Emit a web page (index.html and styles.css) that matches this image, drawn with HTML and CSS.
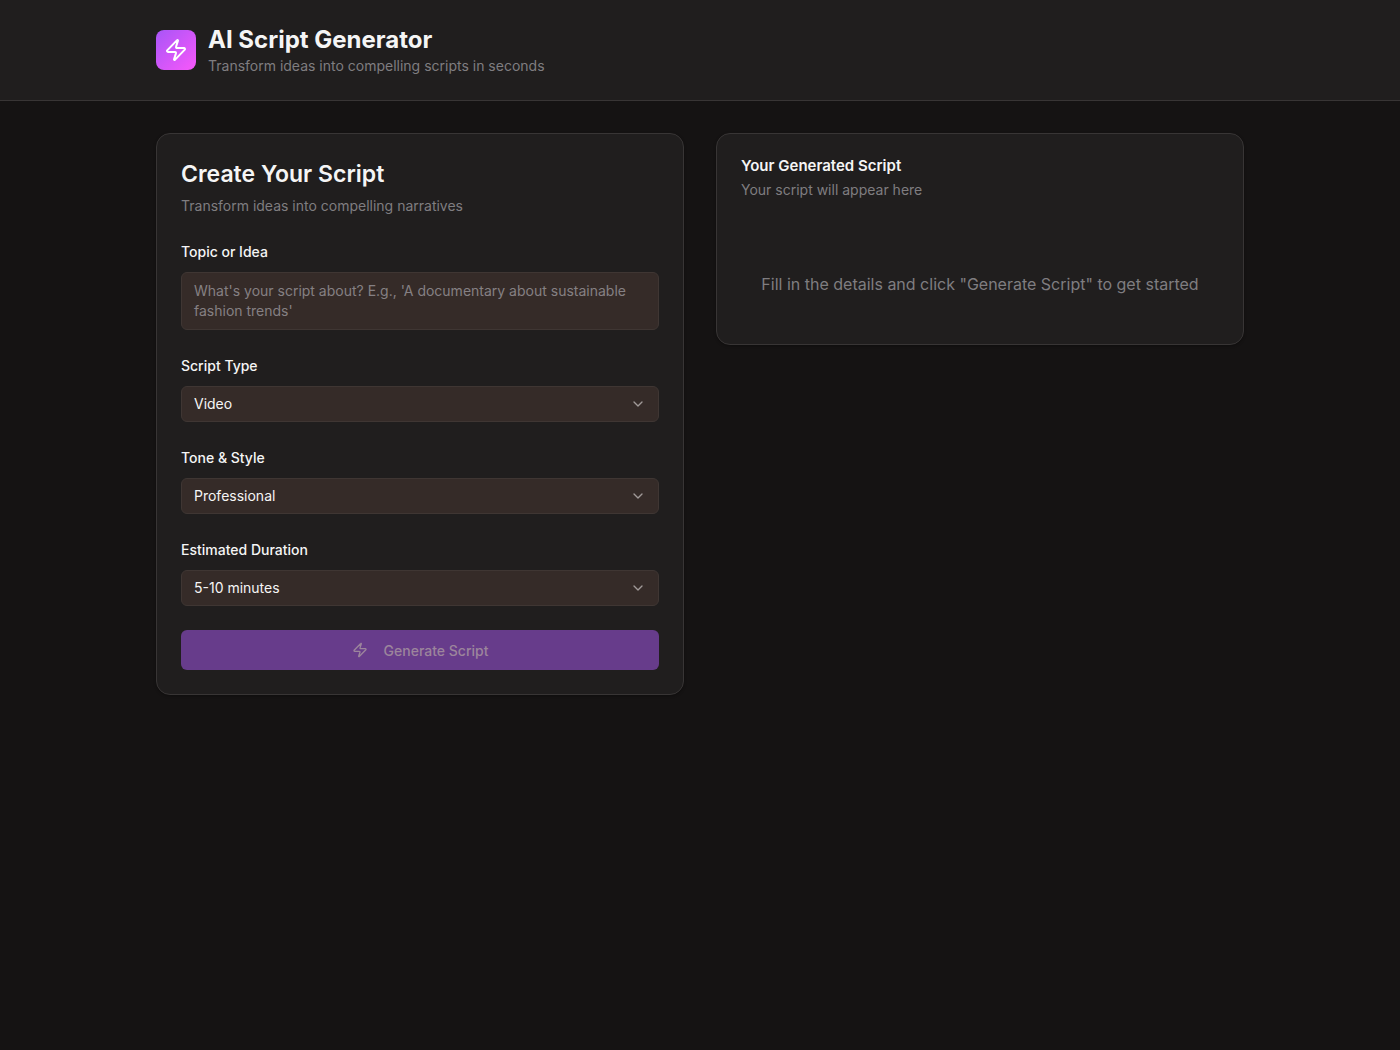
FILE: index.html
```
<!DOCTYPE html>
<html lang="en">
<head>
    <meta charset="UTF-8">
    <meta name="viewport" content="width=device-width, initial-scale=1.0">
    <title>AI Script Generator</title>
    <link rel="stylesheet" href="styles.css">
</head>
<body>

<header class="site-header">
    <div class="container brand">
        <div class="logo">
            <svg class="icon icon-logo" viewBox="0 0 24 24" aria-hidden="true">
                <path d="M4 14a1 1 0 0 1-.78-1.63l9.9-10.2a.5.5 0 0 1 .86.46l-1.92 6.02A1 1 0 0 0 13 10h7a1 1 0 0 1 .78 1.63l-9.9 10.2a.5.5 0 0 1-.86-.46l1.92-6.02A1 1 0 0 0 11 14z"/>
            </svg>
        </div>
        <div>
            <h1>AI Script Generator</h1>
            <p class="muted">Transform ideas into compelling scripts in seconds</p>
        </div>
    </div>
</header>

<main class="container columns">
    <section class="card">
        <h2>Create Your Script</h2>
        <p class="muted">Transform ideas into compelling narratives</p>

        <form class="script-form">
            <div class="field">
                <label for="topic">Topic or Idea</label>
                <textarea id="topic" class="control" rows="2" placeholder="What's your script about? E.g., 'A documentary about sustainable fashion trends'"></textarea>
            </div>

            <div class="field">
                <label for="scriptType">Script Type</label>
                <div class="select-wrap">
                    <select id="scriptType" class="control">
                        <option>Video</option>
                    </select>
                    <svg class="icon chevron" viewBox="0 0 24 24" aria-hidden="true"><path d="m6 9 6 6 6-6"/></svg>
                </div>
            </div>

            <div class="field">
                <label for="tone">Tone &amp; Style</label>
                <div class="select-wrap">
                    <select id="tone" class="control">
                        <option>Professional</option>
                    </select>
                    <svg class="icon chevron" viewBox="0 0 24 24" aria-hidden="true"><path d="m6 9 6 6 6-6"/></svg>
                </div>
            </div>

            <div class="field">
                <label for="duration">Estimated Duration</label>
                <div class="select-wrap">
                    <select id="duration" class="control">
                        <option>5-10 minutes</option>
                    </select>
                    <svg class="icon chevron" viewBox="0 0 24 24" aria-hidden="true"><path d="m6 9 6 6 6-6"/></svg>
                </div>
            </div>

            <button type="submit" class="generate" disabled>
                <svg class="icon icon-small" viewBox="0 0 24 24" aria-hidden="true">
                    <path d="M4 14a1 1 0 0 1-.78-1.63l9.9-10.2a.5.5 0 0 1 .86.46l-1.92 6.02A1 1 0 0 0 13 10h7a1 1 0 0 1 .78 1.63l-9.9 10.2a.5.5 0 0 1-.86-.46l1.92-6.02A1 1 0 0 0 11 14z"/>
                </svg>
                Generate Script
            </button>
        </form>
    </section>

    <section class="card result">
        <h3>Your Generated Script</h3>
        <p class="muted">Your script will appear here</p>
        <p class="empty">Fill in the details and click "Generate Script" to get started</p>
    </section>
</main>

</body>
</html>
```

FILE: styles.css
```
* {
    box-sizing: border-box;
}
body {
    margin: 0;
    font-family: Inter, "Liberation Sans", sans-serif;
    font-size: 16px;
    line-height: 24px;
    background-color: #151313;
    color: #f5f5f5;
}
h1, h2, h3, p {
    margin: 0;
}
.container {
    max-width: 1152px;
    margin: 0 auto;
    padding: 0 32px;
}

/* Header */
.site-header {
    padding: 24px 0;
    background-color: #201e1e;
    border-bottom: 1px solid #383535;
}
.brand {
    display: flex;
    align-items: center;
    gap: 12px;
}
.logo {
    display: flex;
    align-items: center;
    justify-content: center;
    width: 40px;
    height: 40px;
    border-radius: 8px;
    background: linear-gradient(135deg, #a855f7, #f858fa);
}
h1 {
    font-size: 24px;
    line-height: 32px;
    font-weight: 700;
}
h2 {
    font-size: 23px;
    line-height: 32px;
    font-weight: 600;
    margin-bottom: 6px;
}
h3 {
    font-size: 15px;
    line-height: 16px;
    font-weight: 600;
    margin-bottom: 6px;
}
.muted {
    font-size: 14px;
    line-height: 20px;
    color: #7f7d80;
}

/* Icons */
.icon {
    fill: none;
    stroke: currentColor;
    stroke-width: 2;
    stroke-linecap: round;
    stroke-linejoin: round;
}
.icon-logo {
    width: 24px;
    height: 24px;
    color: #fff;
}
.icon-small {
    width: 16px;
    height: 16px;
}

/* Cards */
.columns {
    display: grid;
    grid-template-columns: 1fr 1fr;
    align-items: start;
    gap: 32px;
    padding-top: 32px;
    padding-bottom: 32px;
}
.card {
    padding: 24px;
    background-color: #201e1e;
    border: 1px solid #383535;
    border-radius: 14px;
    box-shadow: 0 1px 3px rgba(0, 0, 0, 0.3);
}
.result {
    padding-bottom: 0;
}
.empty {
    padding: 72px 0 48px;
    text-align: center;
    color: #7f7d80;
}

/* Form */
.script-form {
    display: flex;
    flex-direction: column;
    gap: 24px;
    margin-top: 24px;
}
.field {
    display: flex;
    flex-direction: column;
    gap: 8px;
}
label {
    font-size: 14px;
    font-weight: 500;
}
.control {
    display: block;
    width: 100%;
    padding: 8px 12px;
    font-family: inherit;
    font-size: 14px;
    line-height: 20px;
    color: #f5f5f5;
    background-color: #352b28;
    border: 1px solid #3f3633;
    border-radius: 6px;
    appearance: none;
}
select.control {
    height: 36px;
    padding: 0 12px;
}
textarea.control {
    height: 58px;
    resize: none;
}
.control::placeholder {
    color: #858083;
}
.select-wrap {
    position: relative;
}
.chevron {
    position: absolute;
    top: 10px;
    right: 13px;
    width: 16px;
    height: 16px;
    color: #a09a98;
    pointer-events: none;
}
.generate {
    display: flex;
    align-items: center;
    justify-content: center;
    gap: 16px;
    height: 40px;
    padding: 0 16px;
    font-family: inherit;
    font-size: 14px;
    font-weight: 500;
    color: #9c859c;
    background-color: #673c8b;
    border: none;
    border-radius: 6px;
}

@media (max-width: 900px) {
    .columns {
        grid-template-columns: 1fr;
    }
}
```
